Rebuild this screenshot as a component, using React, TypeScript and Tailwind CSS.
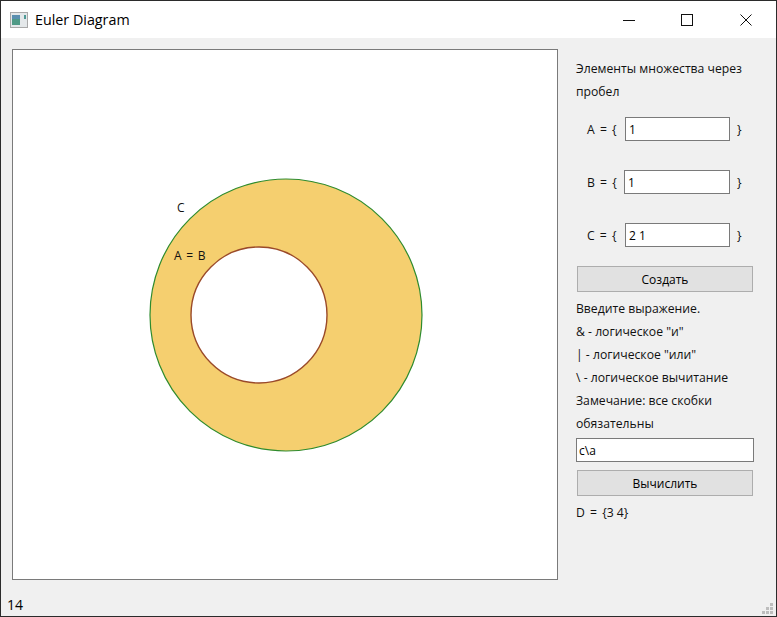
const font = "font-['Open_Sans',sans-serif]";

function SetRow({ name, value, inputClass, labelClass }: { name: string; value: string; inputClass: string; labelClass: string }) {
  return (
    <div className="flex h-[24px] items-center">
      <span className={`whitespace-pre pt-[2px] [word-spacing:2px] ${labelClass}`}>{name} = {"{"}</span>
      <input
        readOnly
        value={value}
        className={`h-[24px] border border-[#7a7a7a] bg-white px-[3px] text-[12px] text-black outline-none ${inputClass}`}
      />
      <span className="ml-[7px] pt-[2px]">{"}"}</span>
    </div>
  );
}

function Line({ children }: { children: string }) {
  return <div className="flex h-[23px] items-center whitespace-nowrap pt-[2px]">{children}</div>;
}

function PushButton({ children }: { children: string }) {
  return (
    <button className="ml-[1px] h-[26px] w-[176px] border border-[#adadad] bg-[#e1e1e1] pt-[1px] text-center text-[12px] text-black">
      {children}
    </button>
  );
}

export default function App() {
  return (
    <div className={`${font} flex h-[617px] w-[777px] flex-col overflow-hidden border border-[#2b2b2b] bg-[#f0f0f0] text-[12.2px] text-[#111]`}>
      {/* Title bar */}
      <div className="flex h-[37px] shrink-0 items-center bg-white">
        <svg width="18" height="16" viewBox="0 0 18 16" className="ml-[9px]">
          <rect x="0.5" y="0.5" width="17" height="15" fill="#e4e8ea" stroke="#a9a9a9" />
          <rect x="2" y="3" width="8" height="10" fill="#4f9a86" />
          <rect x="2" y="3" width="8" height="4" fill="#5a8fb0" />
          <rect x="14" y="3" width="2" height="4" fill="#4f9a96" />
        </svg>
        <span className="ml-[7px] text-[14.3px] text-black">Euler Diagram</span>
        <div className="ml-auto flex items-center">
          <svg width="12" height="12" viewBox="0 0 12 12" className="mr-[46px]">
            <path d="M0 6.5H12" stroke="#111" strokeWidth="1" />
          </svg>
          <svg width="12" height="12" viewBox="0 0 12 12" className="mr-[47px]">
            <rect x="0.5" y="0.5" width="11" height="11" fill="none" stroke="#111" />
          </svg>
          <svg width="12" height="12" viewBox="0 0 12 12" className="mr-[24px]">
            <path d="M0.5 0.5L11.5 11.5M11.5 0.5L0.5 11.5" stroke="#111" strokeWidth="1" />
          </svg>
        </div>
      </div>

      <div className="flex flex-1">
        {/* Diagram canvas */}
        <div className="relative ml-[11px] mt-[11px] h-[531px] w-[546px] shrink-0 border border-[#7a7a7a] bg-white">
          <svg width="544" height="529" viewBox="0 0 544 529">
            <circle cx="273" cy="265" r="136" fill="#f5cf6f" stroke="#2e8b2e" strokeWidth="1.2" />
            <circle cx="246" cy="265" r="68" fill="#fff" stroke="#9a4a2a" strokeWidth="1.4" />
          </svg>
          <span className="absolute left-[164px] top-[149px] text-[12px]">C</span>
          <span className="absolute left-[161px] top-[197px] text-[12px] [word-spacing:1.5px]">A = B</span>
        </div>

        {/* Controls */}
        <div className="ml-[18px] flex w-[180px] flex-col pt-[19px]">
          <Line>Элементы множества через</Line>
          <Line>пробел</Line>
          <div className="ml-[11px] mt-[14px] flex flex-col gap-[29px]">
            <SetRow name="A" value="1" labelClass="w-[38px]" inputClass="w-[105px]" />
            <SetRow name="B" value="1" labelClass="w-[37px]" inputClass="w-[106px]" />
            <SetRow name="C" value="2 1" labelClass="w-[38px]" inputClass="w-[105px]" />
          </div>
          <div className="mt-[19px]">
            <PushButton>Создать</PushButton>
          </div>
          <div className="mt-[5px] flex flex-col">
            <Line>Введите выражение.</Line>
            <Line>{'& - логическое "и"'}</Line>
            <Line>{'| - логическое "или"'}</Line>
            <Line>{"\\ - логическое вычитание"}</Line>
            <Line>Замечание: все скобки</Line>
            <Line>обязательны</Line>
          </div>
          <input
            readOnly
            value="c\a"
            className="mt-[3px] h-[24px] w-[178px] border border-[#7a7a7a] bg-white px-[2px] text-[12px] text-black outline-none"
          />
          <div className="mt-[8px]">
            <PushButton>Вычислить</PushButton>
          </div>
          <div className="mt-[6px] flex h-[23px] items-center whitespace-pre">
            <span className="[word-spacing:2px]">D = </span>
            <span>{"{3 4}"}</span>
          </div>
        </div>
      </div>

      {/* Status bar */}
      <div className="relative flex h-[22px] shrink-0 items-center pb-[1px] pl-[6px] text-[14px] text-black">
        14
        <svg width="11" height="11" viewBox="0 0 11 11" className="absolute bottom-[2px] right-[3px]">
          <path d="M8 0h3v3H8zM4 4h3v3H4zM8 4h3v3H8zM0 8h3v3H0zM4 8h3v3H4zM8 8h3v3H8z" fill="#bdbdbd" />
        </svg>
      </div>
    </div>
  );
}
